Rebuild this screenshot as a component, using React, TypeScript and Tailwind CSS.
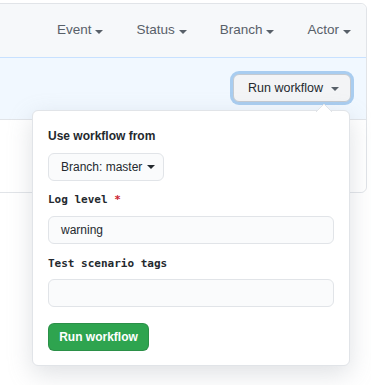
const filters = ["Event", "Status", "Branch", "Actor"]

function Caret({ className }: { className?: string }) {
  return (
    <svg width="8" height="4" viewBox="0 0 8 4" className={className} fill="currentColor">
      <polygon points="0,0 8,0 4,4" />
    </svg>
  )
}

export default function App() {
  const sans = { fontFamily: '"Liberation Sans", Arial, sans-serif' }
  const mono = { fontFamily: '"DejaVu Sans Mono", monospace' }
  return (
    <div className="relative h-[385px] w-[371px] overflow-hidden bg-white text-[#24292e]" style={sans}>
      <div className="ml-[-8px] mr-[4px] mt-[3px] rounded-md border border-[#e1e4e8]">
        {/* filter bar */}
        <div className="flex h-[53px] items-center justify-end gap-[33px] rounded-t-md bg-[#f6f8fa] pr-[15px] text-[13.5px] text-[#586069]">
          {filters.map((f) => (
            <div key={f} className="flex items-center gap-[4px]">
              <span>{f}</span>
              <Caret className="mt-[2px]" />
            </div>
          ))}
        </div>
        {/* run workflow banner */}
        <div className="flex h-[63px] items-start justify-end border-y border-[#c8e1ff] border-b-[#e1e4e8] bg-[#f1f8ff] pr-[15px] pt-[16px]">
          <button className="flex h-[28px] w-[118px] items-center gap-[8px] rounded-md border border-[#c4cad1] bg-[#f3f4f6] pl-[14px] text-[12.5px] text-[#24292e] ring-[3px] ring-[#a9cdf0]">
            <span>Run workflow</span>
            <Caret className="mt-[1px] text-[#586069]" />
          </button>
        </div>
        <div className="h-[72px] rounded-b-md bg-white" />
      </div>

      {/* dropdown */}
      <div className="absolute left-[32px] top-[110px] h-[256px] w-[318px] rounded-md border border-[#e1e4e8] bg-white px-[15px] pt-[16px] shadow-[0_8px_24px_rgba(149,157,165,0.3)]">
        <svg className="absolute left-[283px] top-[-7px]" width="16" height="8" viewBox="0 0 16 8">
          <polygon points="0,8 8,0 16,8" fill="#ffffff" />
          <polyline points="0,8 8,0 16,8" fill="none" stroke="#e1e4e8" strokeWidth="1" />
        </svg>
        <div className="text-[12px] font-semibold leading-[18px]">Use workflow from</div>
        <button className="mt-[8px] flex h-[28px] w-[116px] items-center gap-[5px] rounded-md border border-[#e1e4e8] bg-[#fafbfc] pl-[12px] text-[12px] text-[#24292e]">
          <span>Branch: master</span>
          <Caret />
        </button>
        <div className="mt-[10px] text-[11px] font-semibold leading-[18px]" style={mono}>
          Log level <span className="text-[#cb2431]">*</span>
        </div>
        <div className="mt-[7px] flex h-[28px] w-[286px] items-center rounded-md border border-[#e1e4e8] bg-[#fafbfc] pl-[12px] text-[12px]">
          warning
        </div>
        <div className="mt-[11px] text-[11px] font-semibold leading-[18px]" style={mono}>
          Test scenario tags
        </div>
        <div className="mt-[6px] h-[28px] w-[286px] rounded-md border border-[#e1e4e8] bg-[#fafbfc]" />
        <button className="mt-[16px] flex h-[28px] w-[101px] items-center justify-center rounded-md border border-[rgba(27,31,35,0.15)] bg-[#2ea44f] text-[12px] font-bold text-white">
          Run workflow
        </button>
      </div>
    </div>
  )
}
